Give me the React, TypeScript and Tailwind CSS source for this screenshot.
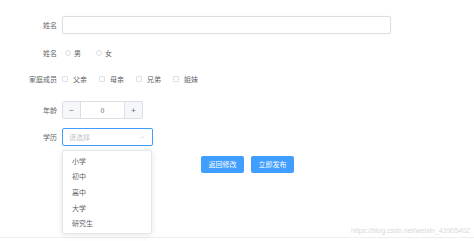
import { ChevronUp } from "lucide-react";

const font = { fontFamily: '"Noto Sans CJK SC", "Noto Sans", sans-serif' };

const Label = ({ text }: { text: string }) => (
  <div className="w-[62px] shrink-0 pr-[5px] text-right text-[7px] text-[#606266]">{text}</div>
);

const App = () => {
  const family = ["父亲", "母亲", "兄弟", "姐妹"];
  const options = ["小学", "初中", "高中", "大学", "研究生"];

  return (
    <div className="relative h-[241px] w-[474px] overflow-hidden bg-white" style={font}>
      <div className="flex flex-col">
        {/* name */}
        <div className="mt-[16px] flex h-[18px] items-center">
          <Label text="姓名" />
          <div className="h-[18px] w-[329px] rounded-[2px] border border-[#dcdfe6] shadow-[0_0_2px_rgba(0,0,0,0.06)]" />
        </div>

        {/* gender */}
        <div className="mt-[10px] flex h-[18px] items-center">
          <Label text="姓名" />
          <div className="flex items-center text-[7px] text-[#606266]">
            <span className="ml-[3px] h-[6px] w-[6px] rounded-full border border-[#dcdfe6]" />
            <span className="ml-[3px]">男</span>
            <span className="ml-[15px] h-[6px] w-[6px] rounded-full border border-[#dcdfe6]" />
            <span className="ml-[3px]">女</span>
          </div>
        </div>

        {/* family */}
        <div className="mt-[8px] flex h-[18px] items-center">
          <Label text="家庭成员" />
          <div className="flex items-center text-[7px] text-[#606266]">
            {family.map((f, i) => (
              <div key={f} className={`flex items-center ${i > 0 ? "ml-[12px]" : ""}`}>
                <span className="h-[6px] w-[6px] rounded-[1px] border border-[#dcdfe6]" />
                <span className="ml-[5px]">{f}</span>
              </div>
            ))}
          </div>
        </div>

        {/* age */}
        <div className="mt-[13px] flex h-[18px] items-center">
          <Label text="年龄" />
          <div className="flex h-[18px] w-[81px] overflow-hidden rounded-[2px] border border-[#dcdfe6] text-[#606266]">
            <div className="flex w-[18px] items-center justify-center border-r border-[#dcdfe6] bg-[#f5f7fa] text-[8px]">−</div>
            <div className="flex flex-1 items-center justify-center text-[7px]">0</div>
            <div className="flex w-[18px] items-center justify-center border-l border-[#dcdfe6] bg-[#f5f7fa] text-[8px]">+</div>
          </div>
        </div>

        {/* education */}
        <div className="mt-[9px] flex h-[18px] items-center">
          <Label text="学历" />
          <div className="relative flex h-[18px] w-[91px] items-center justify-between rounded-[2px] border border-[#409eff] px-[6px]">
            <span className="text-[7px] text-[#c0c4cc]">请选择</span>
            <ChevronUp className="h-[7px] w-[7px] text-[#c0c4cc]" strokeWidth={2} />
            <div className="absolute left-[-1px] top-[21px] z-10 w-[90px] rounded-[2px] border border-[#e4e7ed] bg-white py-[2px] shadow-[0_1px_6px_rgba(0,0,0,0.1)]">
              {options.map((o) => (
                <div key={o} className="flex h-[15.7px] items-center pl-[9px] text-[7px] text-[#606266]">
                  {o}
                </div>
              ))}
            </div>
          </div>
        </div>

        {/* buttons */}
        <div className="mt-[10px] flex h-[17px] items-center pl-[201px]">
          <button className="h-[17px] w-[43px] rounded-[2px] bg-[#409eff] text-[7px] text-white">返回修改</button>
          <button className="ml-[7px] h-[17px] w-[43px] rounded-[2px] bg-[#409eff] text-[7px] text-white">立即发布</button>
        </div>
      </div>

      <div className="absolute bottom-[3px] left-0 right-0 border-t border-[#eeeeee]" />
      <div
        className="absolute bottom-[5px] right-[4px] text-[7px] text-[#d8d8d8]"
        style={{ fontFamily: '"Liberation Sans", sans-serif' }}
      >
        https://blog.csdn.net/weixin_43905402
      </div>
    </div>
  );
};

export default App;
